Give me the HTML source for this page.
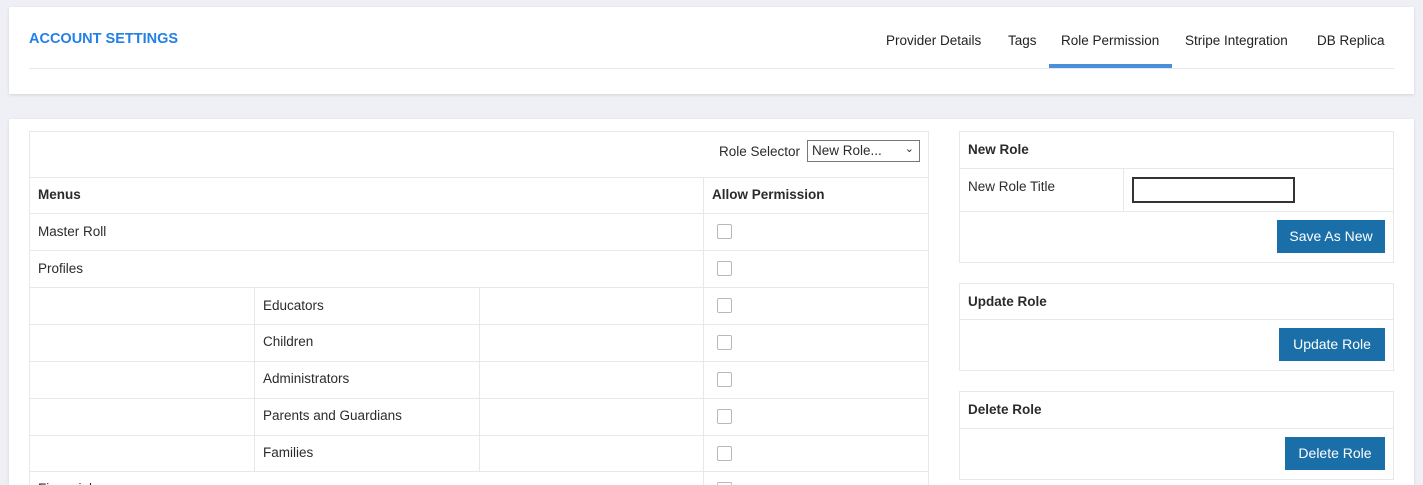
<!DOCTYPE html>
<html style="width:1423px;height:485px;overflow:hidden"><head><style>
*{box-sizing:border-box;margin:0;padding:0}
body{width:1423px;height:485px;background:#eff0f5;font-family:"Liberation Sans",sans-serif;font-size:13px;color:#2b2b2b;position:relative;overflow:hidden}
.a{position:absolute}
.card{background:#fff;box-shadow:0 1px 3px rgba(0,0,0,.12)}
.tab{position:absolute;top:33px;font-size:13.5px;color:#222}
.bx{position:absolute;border:1px solid #e6e8ee}
.h{position:absolute;height:1px;background:#e6e8ee}
.v{position:absolute;width:1px;background:#e6e8ee}
.t{position:absolute;font-size:13.5px}
.b{font-weight:bold}
.cb{position:absolute;left:717px;width:15px;height:15px;border:1px solid #b8b8b8;border-radius:2px;background:#fff}
.btn{position:absolute;background:#1a6fa9;color:#fff;font-size:14px;text-align:center;line-height:33px;height:33px}
</style></head><body>
<div class="a card" style="left:9px;top:7px;width:1405px;height:87px"></div>
<div class="a b" style="left:29px;top:31px;color:#2280e6;font-size:14.5px">ACCOUNT SETTINGS</div>
<div class="tab" style="left:886px">Provider Details</div>
<div class="tab" style="left:1008px">Tags</div>
<div class="tab" style="left:1061px">Role Permission</div>
<div class="tab" style="left:1185px">Stripe Integration</div>
<div class="tab" style="left:1317px">DB Replica</div>
<div class="h" style="left:29px;top:68px;width:1365px"></div>
<div class="a" style="left:1049px;top:64px;width:123px;height:4px;background:#4a90d9"></div>

<div class="a card" style="left:9px;top:119px;width:1405px;height:366px"></div>
<div class="bx" style="left:29px;top:131px;width:900px;height:354px;border-bottom:none"></div>
<div class="t" style="left:719px;top:144px">Role Selector</div>
<div class="a" style="left:807px;top:140px;width:113px;height:22px;border:1px solid #777;background:#fff;font-size:13.5px;padding:2px 4px">New Role...<span style="position:absolute;right:5px;top:1px;font-size:11px">&#8964;</span></div>
<div class="h" style="left:29px;top:177px;width:900px"></div>
<div class="h" style="left:29px;top:213px;width:900px"></div>
<div class="h" style="left:29px;top:250px;width:900px"></div>
<div class="h" style="left:29px;top:287px;width:900px"></div>
<div class="h" style="left:29px;top:324px;width:900px"></div>
<div class="h" style="left:29px;top:361px;width:900px"></div>
<div class="h" style="left:29px;top:398px;width:900px"></div>
<div class="h" style="left:29px;top:435px;width:900px"></div>
<div class="h" style="left:29px;top:471px;width:900px"></div>
<div class="v" style="left:703px;top:177px;height:308px"></div>
<div class="v" style="left:254px;top:287px;height:184px"></div>
<div class="v" style="left:479px;top:287px;height:184px"></div>
<div class="t b" style="left:38px;top:187px">Menus</div>
<div class="t b" style="left:712px;top:187px">Allow Permission</div>
<div class="t" style="left:38px;top:224px">Master Roll</div>
<div class="t" style="left:38px;top:261px">Profiles</div>
<div class="t" style="left:263px;top:298px">Educators</div>
<div class="t" style="left:263px;top:334px">Children</div>
<div class="t" style="left:263px;top:371px">Administrators</div>
<div class="t" style="left:263px;top:408px">Parents and Guardians</div>
<div class="t" style="left:263px;top:445px">Families</div>
<div class="t" style="left:38px;top:481px">Financials</div>
<div class="cb" style="top:224px"></div>
<div class="cb" style="top:261px"></div>
<div class="cb" style="top:298px"></div>
<div class="cb" style="top:335px"></div>
<div class="cb" style="top:372px"></div>
<div class="cb" style="top:409px"></div>
<div class="cb" style="top:446px"></div>
<div class="cb" style="top:482px;height:3px;border-bottom:none"></div>

<div class="bx" style="left:959px;top:131px;width:435px;height:132px"></div>
<div class="h" style="left:959px;top:168px;width:435px"></div>
<div class="h" style="left:959px;top:211px;width:435px"></div>
<div class="v" style="left:1123px;top:168px;height:43px"></div>
<div class="t b" style="left:968px;top:142px">New Role</div>
<div class="t" style="left:968px;top:179px">New Role Title</div>
<div class="a" style="left:1132px;top:177px;width:163px;height:26px;border:2px solid #333;background:#fff"></div>
<div class="btn" style="left:1277px;top:220px;width:108px">Save As New</div>

<div class="bx" style="left:959px;top:283px;width:435px;height:88px"></div>
<div class="h" style="left:959px;top:319px;width:435px"></div>
<div class="t b" style="left:968px;top:294px">Update Role</div>
<div class="btn" style="left:1279px;top:328px;width:106px">Update Role</div>

<div class="bx" style="left:959px;top:391px;width:435px;height:89px"></div>
<div class="h" style="left:959px;top:428px;width:435px"></div>
<div class="t b" style="left:968px;top:402px">Delete Role</div>
<div class="btn" style="left:1285px;top:437px;width:100px">Delete Role</div>
</body></html>
